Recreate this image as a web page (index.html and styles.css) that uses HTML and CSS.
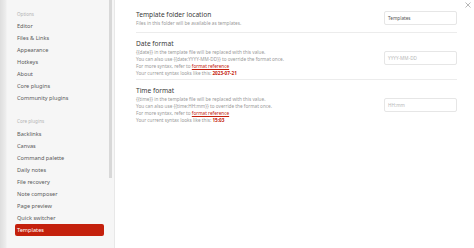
FILE: index.html
```html
<!DOCTYPE html>
<html>
<head>
<meta charset="utf-8">
<link rel="stylesheet" href="styles.css">
</head>
<body>
<div class="app">
  <nav class="sidebar">
    <div class="nav-header">Options</div>
    <div class="nav-item">Editor</div>
    <div class="nav-item">Files &amp; Links</div>
    <div class="nav-item">Appearance</div>
    <div class="nav-item">Hotkeys</div>
    <div class="nav-item">About</div>
    <div class="nav-item">Core plugins</div>
    <div class="nav-item">Community plugins</div>
    <div class="nav-header second">Core plugins</div>
    <div class="nav-item">Backlinks</div>
    <div class="nav-item">Canvas</div>
    <div class="nav-item">Command palette</div>
    <div class="nav-item">Daily notes</div>
    <div class="nav-item">File recovery</div>
    <div class="nav-item">Note composer</div>
    <div class="nav-item">Page preview</div>
    <div class="nav-item">Quick switcher</div>
    <div class="nav-item active">Templates</div>
    <div class="scrollbar"></div>
  </nav>
  <main class="content">
    <div class="close">
      <svg width="6" height="6" viewBox="0 0 6 6"><path d="M0.5 0.5 L5.5 5.5 M5.5 0.5 L0.5 5.5" stroke="#888" stroke-width="0.6" fill="none"/></svg>
    </div>
    <div class="setting first">
      <div class="info">
        <div class="title">Template folder location</div>
        <div class="desc">Files in this folder will be available as templates.</div>
      </div>
      <div class="input">Templates</div>
    </div>
    <div class="setting middle">
      <div class="info">
        <div class="title">Date format</div>
        <div class="desc">{{date}} in the template file will be replaced with this value.</div>
        <div class="desc">You can also use {{date:YYYY-MM-DD}} to override the format once.</div>
        <div class="desc">For more syntax, refer to <span class="link">format reference</span></div>
        <div class="desc">Your current syntax looks like this: <span class="value">2023-07-21</span></div>
      </div>
      <div class="input placeholder">YYYY-MM-DD</div>
    </div>
    <div class="setting last">
      <div class="info">
        <div class="title">Time format</div>
        <div class="desc">{{time}} in the template file will be replaced with this value.</div>
        <div class="desc">You can also use {{time:HH:mm}} to override the format once.</div>
        <div class="desc">For more syntax, refer to <span class="link">format reference</span></div>
        <div class="desc">Your current syntax looks like this: <span class="value">15:03</span></div>
      </div>
      <div class="input placeholder">HH:mm</div>
    </div>
  </main>
</div>
</body>
</html>
```

FILE: styles.css
```css
html, body {
  margin: 0;
  padding: 0;
  background: #ffffff;
}
body {
  font-family: "Noto Sans", "Open Sans", sans-serif;
  width: 474px;
  height: 248px;
  overflow: hidden;
}
.app {
  display: flex;
  height: 248px;
}
.sidebar {
  position: relative;
  width: 99px;
  flex: none;
  padding: 8px 0 0 15px;
  background: linear-gradient(to right, #dedede 0, #e8e8e8 4px, #eeeeee 6px, #f6f6f6 7px, #f6f6f6 100%);
  border-right: 1px solid #e8e8e8;
  box-sizing: content-box;
  height: 240px;
}
.nav-header {
  height: 12px;
  line-height: 12px;
  font-size: 4.6px;
  color: #b4b4b4;
  padding-left: 2px;
}
.nav-header.second {
  margin-top: 11px;
  height: 13px;
}
.nav-item {
  height: 12px;
  line-height: 12px;
  font-size: 5.6px;
  color: #5a5a5a;
  padding-left: 2px;
  width: 87px;
  border-radius: 2px;
}
.nav-item.active {
  background: #c4200c;
  color: #ffffff;
}
.scrollbar {
  position: absolute;
  right: 2px;
  top: 0;
  width: 3px;
  height: 178px;
  background: #d8d8d8;
}
.content {
  position: relative;
  flex: 1;
  padding: 4px 17px 0 21px;
}
.close {
  position: absolute;
  right: 3px;
  top: 2px;
  width: 6px;
  height: 6px;
  display: flex;
}
.setting {
  display: flex;
  align-items: center;
  justify-content: space-between;
  padding-top: 5px;
  border-bottom: 1px solid #ececec;
}
.setting.first {
  padding-bottom: 5px;
}
.setting.middle {
  padding-bottom: 2px;
}
.setting.last {
  border-bottom: none;
}
.title {
  font-size: 6.6px;
  line-height: 11px;
  color: #3a3a3a;
}
.desc {
  font-size: 4.7px;
  line-height: 7px;
  color: #999999;
  white-space: nowrap;
}
.link {
  color: #c4200c;
  text-decoration: underline;
}
.value {
  color: #c4200c;
  font-weight: 700;
}
.input {
  width: 68px;
  height: 12px;
  border: 1px solid #e6e6e6;
  border-radius: 2px;
  font-size: 4.7px;
  line-height: 12px;
  padding-left: 3px;
  color: #555555;
  background: #ffffff;
}
.input.placeholder {
  color: #b8b8b8;
}
```
